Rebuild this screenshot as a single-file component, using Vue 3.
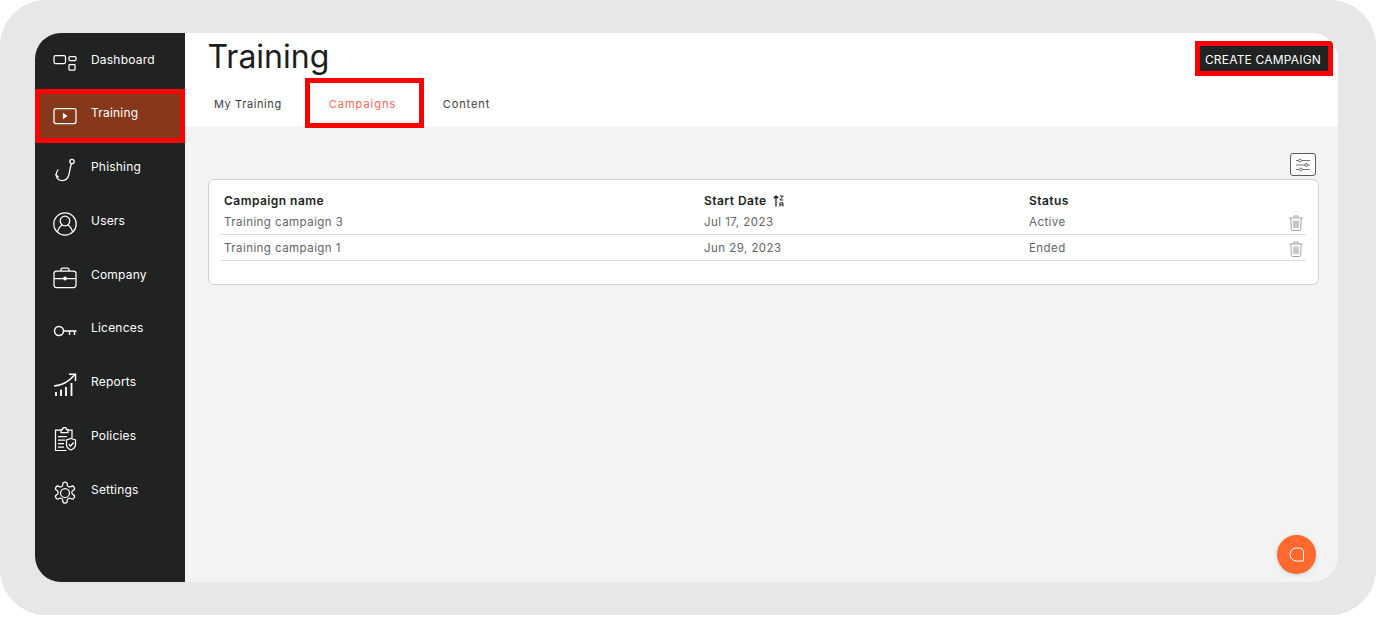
<template>
  <div class="shell">
    <div class="frame">
      <aside class="sidebar">
        <a v-for="item in navItems" :key="item.label" class="nav-item" :class="{ active: item.label === 'Training' }">
          <svg class="nav-icon" viewBox="0 0 24 24" fill="none" stroke="#fff" stroke-width="1.25" v-html="item.icon"></svg>
          <span class="nav-label">{{ item.label }}</span>
        </a>
      </aside>

      <main class="content">
        <header class="page-head">
          <div class="title-row">
            <h1 class="page-title">Training</h1>
            <button class="create-btn">CREATE CAMPAIGN</button>
          </div>
          <nav class="tabs">
            <a class="tab">My Training</a>
            <a class="tab tab-active">Campaigns</a>
            <a class="tab tab-last">Content</a>
          </nav>
        </header>

        <section class="page-body">
          <div class="toolbar">
            <button class="filter-btn">
              <svg width="16" height="14" viewBox="0 0 16 14" fill="none" stroke="#666" stroke-width="0.9">
                <path d="M1 2.500h14M1 7h14M1 11.500h14" />
                <circle cx="5" cy="2.500" r="1.400" fill="#fff" />
                <circle cx="11" cy="7" r="1.400" fill="#fff" />
                <circle cx="6" cy="11.500" r="1.400" fill="#fff" />
              </svg>
            </button>
          </div>

          <div class="card">
            <div class="row row-head">
              <div>Campaign name</div>
              <div class="sort-cell">
                Start Date
                <svg class="sort-icon" width="11" height="12" viewBox="0 0 11 12" fill="none" stroke="#222">
                  <path d="M3 11.500V1M.8 3.200 3 1l2.200 2.200" stroke-width="1.300" />
                  <path d="M6.800 1h3.400L6.800 5h3.400" stroke-width="1" />
                  <path d="M7 11.500V7.800h3v3.700M7 9.800h3" stroke-width="1" />
                </svg>
              </div>
              <div>Status</div>
              <div></div>
            </div>
            <div v-for="row in campaigns" :key="row.name" class="row row-data">
              <div>{{ row.name }}</div>
              <div>{{ row.date }}</div>
              <div>{{ row.status }}</div>
              <div class="trash-cell">
                <svg width="14" height="16" viewBox="0 0 14 16" fill="none" stroke="#a3a3a3" stroke-width="1">
                  <path d="M.5 3h13M5 3V1h4v2" />
                  <path d="M1.800 3l.6 11.600a1 1 0 0 0 1 .9h7.200a1 1 0 0 0 1-.9L12.200 3" />
                  <path d="M5 5.500V13M7 5.500V13M9 5.500V13" stroke-width="1.200" />
                </svg>
              </div>
            </div>
          </div>

          <button class="help-btn">
            <svg width="16" height="15" viewBox="0 0 16 15" fill="none" stroke="#fff" stroke-width="1">
              <path d="M8 1h3a4 4 0 0 1 4 4v9h-7a6.500 6.500 0 0 1 0-13z" transform="translate(-.500 0)" />
            </svg>
          </button>
        </section>
      </main>
    </div>
  </div>
</template>

<script setup>
const navItems = [
  {
    label: 'Dashboard',
    icon: '<rect x="1" y="4.500" width="11.500" height="8" rx="1.500"/><rect x="16" y="5.500" width="7" height="4" rx="1"/><rect x="16" y="13.500" width="6" height="5.500" rx=".5"/>'
  },
  {
    label: 'Training',
    icon: '<rect x="1" y="4.500" width="22" height="15" rx="2"/><path d="M10.500 10l3 2-3 2z" fill="#fff"/>'
  },
  {
    label: 'Phishing',
    icon: '<circle cx="19" cy="3.500" r="2.200"/><path d="M18.500 5.700C17 9 17 13 15.800 17c-1 3.500-3.200 5.500-6.300 5.500-3.500 0-6-2.300-6.500-5.500l2.800 2.200"/><path d="M3 17c.2-2.200 1-3.800 2.200-5.500"/>'
  },
  {
    label: 'Users',
    icon: '<circle cx="12" cy="12" r="11.200"/><circle cx="12" cy="9" r="4.800"/><path d="M4.500 20c.5-3.800 3.200-6.500 5-6.800M19.500 20c-.5-3.800-3.200-6.500-5-6.800"/>'
  },
  {
    label: 'Company',
    icon: '<rect x="1" y="5" width="22" height="16.500" rx="2.500"/><path d="M8 5V3.500a1.500 1.500 0 0 1 1.500-1.500h5A1.500 1.500 0 0 1 16 3.500V5M1 12.500h9M14 12.500h9"/><circle cx="12" cy="12.500" r="1.300" fill="#fff"/>'
  },
  {
    label: 'Licences',
    icon: '<circle cx="6" cy="12" r="4.500" stroke-width="1.500"/><path d="M10.500 12H23.500M16.500 12v4M21.500 12v4" stroke-width="1.500"/>'
  },
  {
    label: 'Reports',
    icon: '<path d="M1 13c7.500-.5 14-3.500 20.500-11" stroke-width="1.500"/><path d="M16 1.200h6.500V8" stroke-width="1.500"/><path d="M3 23v-4M8 23v-6.500M13 23v-9M18.500 23v-13" stroke-width="1.800"/>'
  },
  {
    label: 'Policies',
    icon: '<path d="M8 3H2.500v20.500h11M15.500 3H19v8M8 5.500V2.500h1.500a2 2 0 0 1 4 0H15v3z"/><path d="M5 9.500h9M5 13h7M5 16.500h6M5 20h6"/><path d="M18 11.500l4.500 1.500v4.500c0 2.500-2 4.500-4.500 5.500-2.500-1-4.500-3-4.500-5.500V13z"/><path d="M15.800 17.200l1.800 1.800 3-3.500"/>'
  },
  {
    label: 'Settings',
    icon: '<path d="M12.220 1h-.44a2 2 0 0 0-2 2v.7a2 2 0 0 1-1 1.730l-.43.250a2 2 0 0 1-2 0l-.6-.3a2 2 0 0 0-2.730.730l-.22.380a2 2 0 0 0 .730 2.730l.6.350a2 2 0 0 1 1 1.720v.510a2 2 0 0 1-1 1.740l-.6.340a2 2 0 0 0-.730 2.730l.22.380a2 2 0 0 0 2.730.730l.6-.3a2 2 0 0 1 2 0l.43.250a2 2 0 0 1 1 1.730v.7a2 2 0 0 0 2 2h.44a2 2 0 0 0 2-2v-.7a2 2 0 0 1 1-1.730l.43-.250a2 2 0 0 1 2 0l.6.3a2 2 0 0 0 2.730-.730l.22-.390a2 2 0 0 0-.730-2.730l-.6-.330a2 2 0 0 1-1-1.740v-.5a2 2 0 0 1 1-1.740l.6-.340a2 2 0 0 0 .730-2.730l-.22-.380a2 2 0 0 0-2.730-.730l-.6.300a2 2 0 0 1-2 0l-.43-.250a2 2 0 0 1-1-1.730V3a2 2 0 0 0-2-2z"/><circle cx="12" cy="12" r="4.500"/>'
  }
];

const campaigns = [
  { name: 'Training campaign 3', date: 'Jul 17, 2023', status: 'Active' },
  { name: 'Training campaign 1', date: 'Jun 29, 2023', status: 'Ended' }
];
</script>

<style>
html,
body {
  margin: 0;
  background: #fff;
}
</style>

<style scoped>
.shell {
  box-sizing: border-box;
  width: 1376px;
  height: 615px;
  padding: 33px 38px 33px 35px;
  background: #e7e7e7;
  border-radius: 46px;
  font-family: Inter, "Liberation Sans", sans-serif;
}

.frame {
  display: flex;
  height: 549px;
  border-radius: 26px;
  overflow: hidden;
  background: #f3f3f3;
}

.sidebar {
  width: 150px;
  flex-shrink: 0;
  box-sizing: border-box;
  padding-top: 2.700px;
  background: #212322;
}

.nav-item {
  display: flex;
  align-items: center;
  box-sizing: border-box;
  height: 53.750px;
  padding-left: 17.500px;
  color: #fff;
  font-size: 12px;
  letter-spacing: 0.2px;
}

.nav-item.active {
  background: #87371a;
  outline: 5px solid #fe0000;
  outline-offset: -5px;
}

.nav-icon {
  width: 24px;
  height: 24px;
  flex-shrink: 0;
}

.nav-label {
  margin-left: 14.500px;
  padding-bottom: 7px;
}

.content {
  flex: 1;
  display: flex;
  flex-direction: column;
  min-width: 0;
}

.page-head {
  height: 93px;
  flex-shrink: 0;
  background: #fff;
}

.title-row {
  display: flex;
  justify-content: space-between;
  height: 45px;
  padding: 0 10px 0 22.500px;
}

.page-title {
  margin: 5px 0 0;
  font-size: 32px;
  font-weight: 400;
  line-height: 38px;
  color: #1c1e1d;
}

.create-btn {
  align-self: flex-start;
  height: 25px;
  width: 128px;
  margin-top: 13px;
  padding: 1px 2px 0 0;
  border: 0;
  background: #212322;
  color: #fff;
  font: inherit;
  font-size: 12px;
  letter-spacing: 0.2px;
  white-space: nowrap;
  outline: 5px solid #fe0000;
}

.tabs {
  display: flex;
  margin-left: 5px;
}

.tab {
  position: relative;
  display: flex;
  align-items: center;
  box-sizing: border-box;
  height: 50px;
  padding: 1px 23px 0 24px;
  font-size: 11px;
  color: #3b3d3f;
  letter-spacing: 0.6px;
  white-space: nowrap;
}

.tab-active {
  width: 119px;
  color: #f7695c;
  letter-spacing: 1px;
  background: #fff;
  outline: 5px solid #fe0000;
  outline-offset: -5px;
}

.tab-last {
  padding-left: 19px;
  letter-spacing: 0.9px;
}

.page-body {
  position: relative;
  flex: 1;
  padding: 27px 19px 0 23px;
}

.toolbar {
  display: flex;
  justify-content: flex-end;
  margin-bottom: 3px;
  padding-right: 3px;
}

.filter-btn {
  display: flex;
  align-items: center;
  justify-content: center;
  width: 26px;
  height: 23px;
  padding: 0;
  border: 1px solid #5c5c5c;
  border-radius: 3px;
  background: #fff;
}

.card {
  box-sizing: border-box;
  height: 106px;
  padding: 12px 12px 0;
  border: 1px solid #d2d2d2;
  border-radius: 6px;
  background: #fff;
}

.row {
  display: grid;
  grid-template-columns: 480px 325px 1fr 24px;
  padding-left: 3px;
  align-items: center;
  font-size: 11.500px;
  letter-spacing: 0.45px;
}

.row-head {
  height: 17px;
  font-size: 12px;
  font-weight: 600;
  letter-spacing: 0.45px;
  color: #1c1e1d;
}

.sort-cell {
  display: flex;
  align-items: center;
}

.sort-icon {
  margin-left: 6px;
}

.row-data {
  height: 25px;
  border-bottom: 1px solid #dcdcdc;
  color: #636567;
}

.trash-cell {
  display: flex;
  justify-content: flex-end;
  padding: 3px 3px 0 0;
}

.help-btn {
  position: absolute;
  right: 22px;
  bottom: 8px;
  display: flex;
  align-items: center;
  justify-content: center;
  width: 39px;
  height: 39px;
  padding: 0;
  border: 0;
  border-radius: 50%;
  background: #ff692d;
  box-shadow: 0 1px 4px rgba(0, 0, 0, 0.15);
}
</style>
